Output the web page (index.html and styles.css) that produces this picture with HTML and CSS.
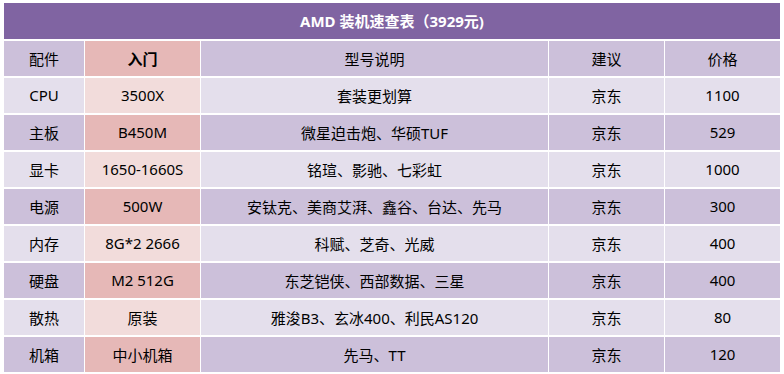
FILE: index.html
```html
<!DOCTYPE html>
<html lang="zh-CN">
<head>
<meta charset="utf-8">
<title>AMD 装机速查表</title>
<link rel="stylesheet" href="styles.css">
</head>
<body>
<div class="sheet">
  <div class="title">AMD 装机速查表（3929元)</div>
  <div class="grid">
    <div class="cell dark">配件</div><div class="cell pink-dark bold">入门</div><div class="cell dark">型号说明</div><div class="cell dark">建议</div><div class="cell dark">价格</div>

    <div class="cell light">CPU</div><div class="cell pink-light">3500X</div><div class="cell light">套装更划算</div><div class="cell light">京东</div><div class="cell light">1100</div>

    <div class="cell dark">主板</div><div class="cell pink-dark">B450M</div><div class="cell dark">微星迫击炮、华硕TUF</div><div class="cell dark">京东</div><div class="cell dark">529</div>

    <div class="cell light">显卡</div><div class="cell pink-light">1650-1660S</div><div class="cell light">铭瑄、影驰、七彩虹</div><div class="cell light">京东</div><div class="cell light">1000</div>

    <div class="cell dark">电源</div><div class="cell pink-dark">500W</div><div class="cell dark">安钛克、美商艾湃、鑫谷、台达、先马</div><div class="cell dark">京东</div><div class="cell dark">300</div>

    <div class="cell light">内存</div><div class="cell pink-light">8G*2 2666</div><div class="cell light">科赋、芝奇、光威</div><div class="cell light">京东</div><div class="cell light">400</div>

    <div class="cell dark">硬盘</div><div class="cell pink-dark">M2 512G</div><div class="cell dark">东芝铠侠、西部数据、三星</div><div class="cell dark">京东</div><div class="cell dark">400</div>

    <div class="cell light">散热</div><div class="cell pink-light">原装</div><div class="cell light">雅浚B3、玄冰400、利民AS120</div><div class="cell light">京东</div><div class="cell light">80</div>

    <div class="cell dark">机箱</div><div class="cell pink-dark">中小机箱</div><div class="cell dark">先马、TT</div><div class="cell dark">京东</div><div class="cell dark">120</div>
  </div>
</div>
</body>
</html>
```
FILE: styles.css
```css
html, body {
  margin: 0;
  padding: 0;
  background: #ffffff;
}

body {
  font-family: "Noto Sans", "Noto Sans CJK SC", sans-serif;
  font-size: 15px;
  color: #000000;
}

.sheet {
  padding: 3px 0 0 4px;
  width: 776px;
}

.title {
  height: 36px;
  margin-bottom: 2px;
  padding-bottom: 1px;
  box-sizing: border-box;
  background: #8064a2;
  color: #ffffff;
  font-weight: bold;
  display: flex;
  align-items: center;
  justify-content: center;
}

.grid {
  display: grid;
  grid-template-columns: 80px 115px 347px 115px 115px;
  grid-auto-rows: 35px;
  column-gap: 1px;
  row-gap: 2px;
}

.cell {
  display: flex;
  align-items: center;
  justify-content: center;
  white-space: nowrap;
  padding-bottom: 1px;
  box-sizing: border-box;
}

.dark { background: #ccc0da; }
.light { background: #e4dfec; }
.pink-dark { background: #e6b8b7; }
.pink-light { background: #f2dcdb; }
.bold { font-weight: bold; }
```
